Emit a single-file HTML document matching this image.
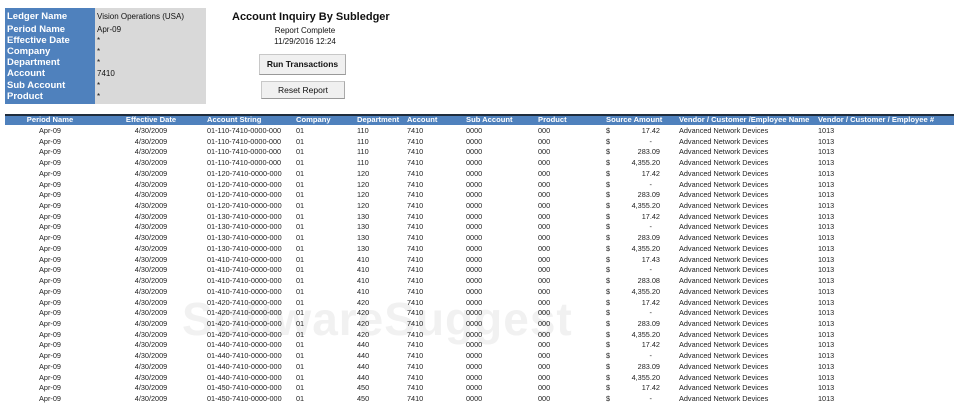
<!DOCTYPE html>
<html><head><meta charset="utf-8"><style>
*{margin:0;padding:0;box-sizing:border-box}
body{width:960px;height:420px;background:#fff;position:relative;overflow:hidden;font-family:"Liberation Sans",sans-serif;color:#111}
.lab{position:absolute;left:5px;top:8px;width:90px;height:96px;background:#4f81bd}
.val{position:absolute;left:95px;top:8px;width:111px;height:96px;background:#d9d9d9}
.l{position:absolute;left:7px;font-size:9.5px;font-weight:bold;color:#fff;line-height:11px}
.v{position:absolute;left:97px;font-size:8px;color:#111;line-height:11px}
.t{position:absolute;left:232px;top:11px;font-size:11px;font-weight:bold}
.s{position:absolute;left:230px;width:150px;text-align:center;font-size:8px}
.btn{position:absolute;background:#f0f0f0;border:1px solid #c8c8c8;border-right-color:#aaa;border-bottom-color:#999;font-size:8.5px;text-align:center}
.wm{position:absolute;left:182px;top:292px;font-size:46px;font-weight:bold;color:#f1f1f1;letter-spacing:1px}
.bar{position:absolute;left:5px;top:114px;width:949px;height:2px;background:#1f2d3d}
.hd{position:absolute;left:5px;top:116px;width:949px;height:9px;background:#4f81bd}
table{position:absolute;left:5px;top:115px;border-collapse:collapse;table-layout:fixed;width:949px;font-size:7.3px;font-family:"Liberation Sans",sans-serif}
th{color:#fff;font-weight:bold;height:10px;line-height:10px;text-align:left;white-space:nowrap;overflow:hidden;font-size:7.6px}
tr:nth-child(2) td{padding-top:1px}
td{height:10.72px;line-height:10.72px;white-space:nowrap;text-align:left;color:#222}
.c{text-align:center}
.r{text-align:right;padding-right:11px}
.p{padding-left:8px}
</style></head><body>
<div class="lab"></div><div class="val"></div>
<div class="l" style="top:11px">Ledger Name</div><div class="v" style="top:11px">Vision Operations (USA)</div>
<div class="l" style="top:24px">Period Name</div><div class="v" style="top:24px">Apr-09</div>
<div class="l" style="top:35px">Effective Date</div><div class="v" style="top:35px">*</div>
<div class="l" style="top:46px">Company</div><div class="v" style="top:46px">*</div>
<div class="l" style="top:57px">Department</div><div class="v" style="top:57px">*</div>
<div class="l" style="top:68px">Account</div><div class="v" style="top:68px">7410</div>
<div class="l" style="top:80px">Sub Account</div><div class="v" style="top:80px">*</div>
<div class="l" style="top:91px">Product</div><div class="v" style="top:91px">*</div>
<div class="t">Account Inquiry By Subledger</div>
<div class="s" style="top:26px">Report Complete</div>
<div class="s" style="top:37px">11/29/2016 12:24</div>
<div class="btn" style="left:259px;top:54px;width:87px;height:21px;line-height:19px;font-weight:bold">Run Transactions</div>
<div class="btn" style="left:261px;top:81px;width:84px;height:18px;line-height:16px">Reset Report</div>
<div class="wm">SoftwareSuggest</div>
<div class="bar"></div><div class="hd"></div>
<table>
<colgroup><col style="width:90px"><col style="width:112px"><col style="width:89px"><col style="width:61px"><col style="width:50px"><col style="width:59px"><col style="width:72px"><col style="width:68px"><col style="width:65px"><col style="width:147px"><col style="width:136px"></colgroup>
<tr><th class="c">Period Name</th><th class="c">Effective Date</th><th>Account String</th><th>Company</th><th>Department</th><th>Account</th><th>Sub Account</th><th>Product</th><th>Source Amount</th><th class="p">Vendor / Customer /Employee Name</th><th>Vendor / Customer / Employee #</th></tr>
<tr><td class="c">Apr-09</td><td class="c">4/30/2009</td><td>01-110-7410-0000-000</td><td>01</td><td>110</td><td>7410</td><td>0000</td><td>000</td><td class="r"><span style="float:left">$</span>17.42</td><td class="p">Advanced Network Devices</td><td>1013</td></tr>
<tr><td class="c">Apr-09</td><td class="c">4/30/2009</td><td>01-110-7410-0000-000</td><td>01</td><td>110</td><td>7410</td><td>0000</td><td>000</td><td class="r"><span style="float:left">$</span>-&nbsp;&nbsp;&nbsp;&nbsp;</td><td class="p">Advanced Network Devices</td><td>1013</td></tr>
<tr><td class="c">Apr-09</td><td class="c">4/30/2009</td><td>01-110-7410-0000-000</td><td>01</td><td>110</td><td>7410</td><td>0000</td><td>000</td><td class="r"><span style="float:left">$</span>283.09</td><td class="p">Advanced Network Devices</td><td>1013</td></tr>
<tr><td class="c">Apr-09</td><td class="c">4/30/2009</td><td>01-110-7410-0000-000</td><td>01</td><td>110</td><td>7410</td><td>0000</td><td>000</td><td class="r"><span style="float:left">$</span>4,355.20</td><td class="p">Advanced Network Devices</td><td>1013</td></tr>
<tr><td class="c">Apr-09</td><td class="c">4/30/2009</td><td>01-120-7410-0000-000</td><td>01</td><td>120</td><td>7410</td><td>0000</td><td>000</td><td class="r"><span style="float:left">$</span>17.42</td><td class="p">Advanced Network Devices</td><td>1013</td></tr>
<tr><td class="c">Apr-09</td><td class="c">4/30/2009</td><td>01-120-7410-0000-000</td><td>01</td><td>120</td><td>7410</td><td>0000</td><td>000</td><td class="r"><span style="float:left">$</span>-&nbsp;&nbsp;&nbsp;&nbsp;</td><td class="p">Advanced Network Devices</td><td>1013</td></tr>
<tr><td class="c">Apr-09</td><td class="c">4/30/2009</td><td>01-120-7410-0000-000</td><td>01</td><td>120</td><td>7410</td><td>0000</td><td>000</td><td class="r"><span style="float:left">$</span>283.09</td><td class="p">Advanced Network Devices</td><td>1013</td></tr>
<tr><td class="c">Apr-09</td><td class="c">4/30/2009</td><td>01-120-7410-0000-000</td><td>01</td><td>120</td><td>7410</td><td>0000</td><td>000</td><td class="r"><span style="float:left">$</span>4,355.20</td><td class="p">Advanced Network Devices</td><td>1013</td></tr>
<tr><td class="c">Apr-09</td><td class="c">4/30/2009</td><td>01-130-7410-0000-000</td><td>01</td><td>130</td><td>7410</td><td>0000</td><td>000</td><td class="r"><span style="float:left">$</span>17.42</td><td class="p">Advanced Network Devices</td><td>1013</td></tr>
<tr><td class="c">Apr-09</td><td class="c">4/30/2009</td><td>01-130-7410-0000-000</td><td>01</td><td>130</td><td>7410</td><td>0000</td><td>000</td><td class="r"><span style="float:left">$</span>-&nbsp;&nbsp;&nbsp;&nbsp;</td><td class="p">Advanced Network Devices</td><td>1013</td></tr>
<tr><td class="c">Apr-09</td><td class="c">4/30/2009</td><td>01-130-7410-0000-000</td><td>01</td><td>130</td><td>7410</td><td>0000</td><td>000</td><td class="r"><span style="float:left">$</span>283.09</td><td class="p">Advanced Network Devices</td><td>1013</td></tr>
<tr><td class="c">Apr-09</td><td class="c">4/30/2009</td><td>01-130-7410-0000-000</td><td>01</td><td>130</td><td>7410</td><td>0000</td><td>000</td><td class="r"><span style="float:left">$</span>4,355.20</td><td class="p">Advanced Network Devices</td><td>1013</td></tr>
<tr><td class="c">Apr-09</td><td class="c">4/30/2009</td><td>01-410-7410-0000-000</td><td>01</td><td>410</td><td>7410</td><td>0000</td><td>000</td><td class="r"><span style="float:left">$</span>17.43</td><td class="p">Advanced Network Devices</td><td>1013</td></tr>
<tr><td class="c">Apr-09</td><td class="c">4/30/2009</td><td>01-410-7410-0000-000</td><td>01</td><td>410</td><td>7410</td><td>0000</td><td>000</td><td class="r"><span style="float:left">$</span>-&nbsp;&nbsp;&nbsp;&nbsp;</td><td class="p">Advanced Network Devices</td><td>1013</td></tr>
<tr><td class="c">Apr-09</td><td class="c">4/30/2009</td><td>01-410-7410-0000-000</td><td>01</td><td>410</td><td>7410</td><td>0000</td><td>000</td><td class="r"><span style="float:left">$</span>283.08</td><td class="p">Advanced Network Devices</td><td>1013</td></tr>
<tr><td class="c">Apr-09</td><td class="c">4/30/2009</td><td>01-410-7410-0000-000</td><td>01</td><td>410</td><td>7410</td><td>0000</td><td>000</td><td class="r"><span style="float:left">$</span>4,355.20</td><td class="p">Advanced Network Devices</td><td>1013</td></tr>
<tr><td class="c">Apr-09</td><td class="c">4/30/2009</td><td>01-420-7410-0000-000</td><td>01</td><td>420</td><td>7410</td><td>0000</td><td>000</td><td class="r"><span style="float:left">$</span>17.42</td><td class="p">Advanced Network Devices</td><td>1013</td></tr>
<tr><td class="c">Apr-09</td><td class="c">4/30/2009</td><td>01-420-7410-0000-000</td><td>01</td><td>420</td><td>7410</td><td>0000</td><td>000</td><td class="r"><span style="float:left">$</span>-&nbsp;&nbsp;&nbsp;&nbsp;</td><td class="p">Advanced Network Devices</td><td>1013</td></tr>
<tr><td class="c">Apr-09</td><td class="c">4/30/2009</td><td>01-420-7410-0000-000</td><td>01</td><td>420</td><td>7410</td><td>0000</td><td>000</td><td class="r"><span style="float:left">$</span>283.09</td><td class="p">Advanced Network Devices</td><td>1013</td></tr>
<tr><td class="c">Apr-09</td><td class="c">4/30/2009</td><td>01-420-7410-0000-000</td><td>01</td><td>420</td><td>7410</td><td>0000</td><td>000</td><td class="r"><span style="float:left">$</span>4,355.20</td><td class="p">Advanced Network Devices</td><td>1013</td></tr>
<tr><td class="c">Apr-09</td><td class="c">4/30/2009</td><td>01-440-7410-0000-000</td><td>01</td><td>440</td><td>7410</td><td>0000</td><td>000</td><td class="r"><span style="float:left">$</span>17.42</td><td class="p">Advanced Network Devices</td><td>1013</td></tr>
<tr><td class="c">Apr-09</td><td class="c">4/30/2009</td><td>01-440-7410-0000-000</td><td>01</td><td>440</td><td>7410</td><td>0000</td><td>000</td><td class="r"><span style="float:left">$</span>-&nbsp;&nbsp;&nbsp;&nbsp;</td><td class="p">Advanced Network Devices</td><td>1013</td></tr>
<tr><td class="c">Apr-09</td><td class="c">4/30/2009</td><td>01-440-7410-0000-000</td><td>01</td><td>440</td><td>7410</td><td>0000</td><td>000</td><td class="r"><span style="float:left">$</span>283.09</td><td class="p">Advanced Network Devices</td><td>1013</td></tr>
<tr><td class="c">Apr-09</td><td class="c">4/30/2009</td><td>01-440-7410-0000-000</td><td>01</td><td>440</td><td>7410</td><td>0000</td><td>000</td><td class="r"><span style="float:left">$</span>4,355.20</td><td class="p">Advanced Network Devices</td><td>1013</td></tr>
<tr><td class="c">Apr-09</td><td class="c">4/30/2009</td><td>01-450-7410-0000-000</td><td>01</td><td>450</td><td>7410</td><td>0000</td><td>000</td><td class="r"><span style="float:left">$</span>17.42</td><td class="p">Advanced Network Devices</td><td>1013</td></tr>
<tr><td class="c">Apr-09</td><td class="c">4/30/2009</td><td>01-450-7410-0000-000</td><td>01</td><td>450</td><td>7410</td><td>0000</td><td>000</td><td class="r"><span style="float:left">$</span>-&nbsp;&nbsp;&nbsp;&nbsp;</td><td class="p">Advanced Network Devices</td><td>1013</td></tr>
</table>
</body></html>
